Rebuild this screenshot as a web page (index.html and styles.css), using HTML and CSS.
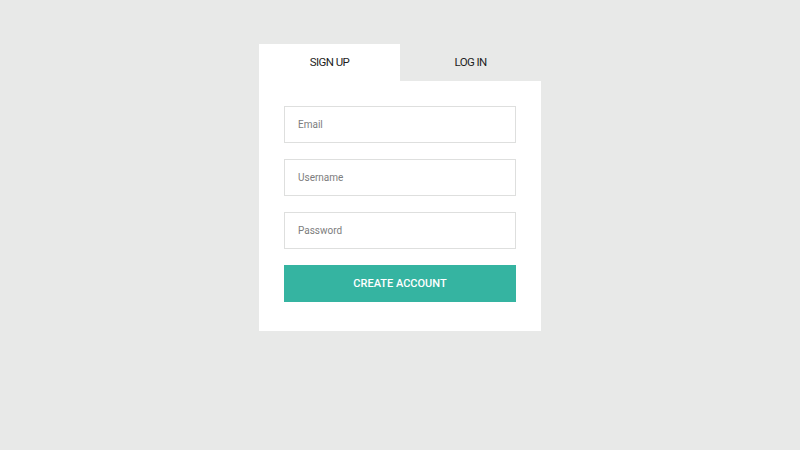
FILE: index.html
```html
<!DOCTYPE html>
<html lang="en">
<head>
    <meta charset="UTF-8">
    <meta name="viewport" content="width=device-width, initial-scale=1.0">
    <title>Sign Up</title>
    <link rel="stylesheet" href="styles.css">
</head>
<body>
    <div class="form-wrap">
        <div class="tabs">
            <div class="tab active">Sign Up</div>
            <div class="tab">Log In</div>
        </div>
        <div class="form-body">
            <input type="email" class="field" placeholder="Email">
            <input type="text" class="field" placeholder="Username">
            <input type="password" class="field" placeholder="Password">
            <button class="btn">Create Account</button>
        </div>
    </div>
</body>
</html>
```

FILE: styles.css
```css
body {
    font-family: 'Roboto', 'Liberation Sans', sans-serif;
    background-color: #e8e9e8;
    margin: 0;
    padding: 44px 0 0;
}
.form-wrap {
    width: 282px;
    margin: 0 auto;
}
.tabs {
    display: flex;
}
.tab {
    flex: 1;
    height: 37px;
    line-height: 37px;
    text-align: center;
    font-size: 11.5px;
    letter-spacing: -0.6px;
    text-transform: uppercase;
    color: #1e1e1e;
}
.tab.active {
    background-color: #fff;
}
.form-body {
    background-color: #fff;
    padding: 25px 25px 29px;
    display: flex;
    flex-direction: column;
    gap: 16px;
}
.field {
    box-sizing: border-box;
    height: 37px;
    width: 100%;
    margin: 0;
    border: 1px solid #dedfde;
    padding: 0 13px;
    font-family: inherit;
    font-size: 10px;
    color: #555;
    outline: none;
}
.field::placeholder {
    color: #7d7d7d;
}
.btn {
    height: 37px;
    border: none;
    background-color: #35b4a1;
    color: #fff;
    font-family: inherit;
    font-size: 11px;
    font-weight: 500;
    text-transform: uppercase;
    cursor: pointer;
}
```
